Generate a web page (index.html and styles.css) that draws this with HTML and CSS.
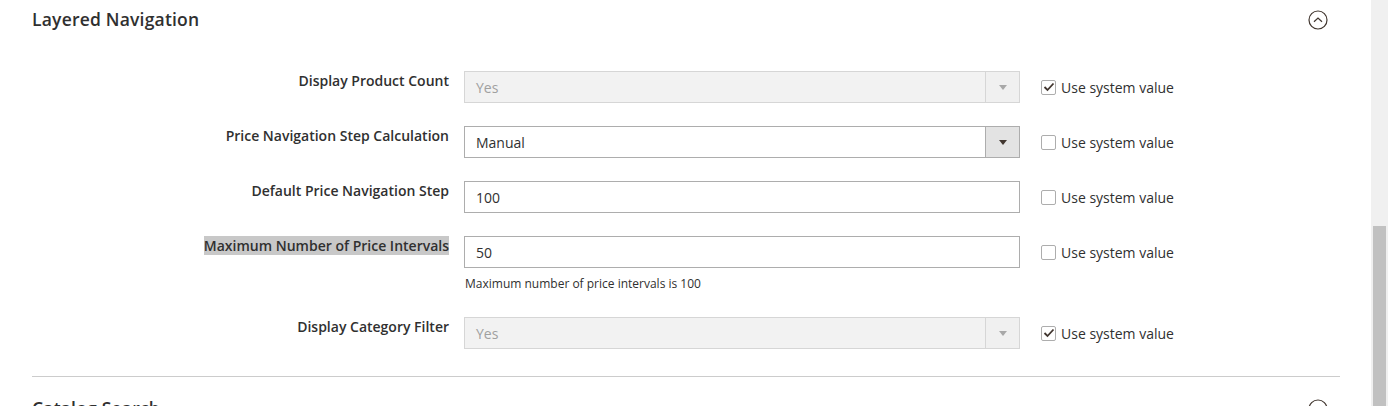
FILE: index.html
```html
<!DOCTYPE html>
<html lang="en">

<head>
  <meta charset="UTF-8" />
  <title>Catalog Configuration</title>
  <meta name="viewport" content="width=device-width, initial-scale=1.0">
  <link rel="stylesheet" href="styles.css">
</head>

<body>
  <div class="page">
    <div class="main">

      <!-- Layered Navigation -->
      <div class="section">
        <div class="section-head">
          <h2>Layered Navigation</h2>
          <svg class="toggle" width="20" height="20" viewBox="0 0 20 20">
            <circle cx="10" cy="10" r="9" fill="none" stroke="#41362f" stroke-width="1.2" />
            <path d="M6 11.8 L10 8 L14 11.8" fill="none" stroke="#41362f" stroke-width="1.2" />
          </svg>
        </div>

        <div class="fieldset">
          <div class="row">
            <div class="label"><span>Display Product Count</span></div>
            <div class="control">
              <div class="select disabled">
                <span class="value">Yes</span>
                <span class="arrow"></span>
              </div>
            </div>
            <label class="use-default">
              <span class="checkbox checked">
                <svg width="12" height="10" viewBox="0 0 12 10"><path d="M1.5 5 L4.5 8 L10.5 1.5" fill="none" stroke="#41362f" stroke-width="1.8" /></svg>
              </span>
              Use system value
            </label>
          </div>

          <div class="row">
            <div class="label"><span>Price Navigation Step Calculation</span></div>
            <div class="control">
              <div class="select">
                <span class="value">Manual</span>
                <span class="arrow"></span>
              </div>
            </div>
            <label class="use-default"><span class="checkbox"></span>Use system value</label>
          </div>

          <div class="row">
            <div class="label"><span>Default Price Navigation Step</span></div>
            <div class="control">
              <div class="input">100</div>
            </div>
            <label class="use-default"><span class="checkbox"></span>Use system value</label>
          </div>

          <div class="row">
            <div class="label"><span class="selected">Maximum Number of Price Intervals</span></div>
            <div class="control">
              <div class="input">50</div>
              <div class="note">Maximum number of price intervals is 100</div>
            </div>
            <label class="use-default"><span class="checkbox"></span>Use system value</label>
          </div>

          <div class="row">
            <div class="label"><span>Display Category Filter</span></div>
            <div class="control">
              <div class="select disabled">
                <span class="value">Yes</span>
                <span class="arrow"></span>
              </div>
            </div>
            <label class="use-default">
              <span class="checkbox checked">
                <svg width="12" height="10" viewBox="0 0 12 10"><path d="M1.5 5 L4.5 8 L10.5 1.5" fill="none" stroke="#41362f" stroke-width="1.8" /></svg>
              </span>
              Use system value
            </label>
          </div>
        </div>
      </div>

      <!-- Catalog Search -->
      <div class="section next">
        <div class="section-head">
          <h2>Catalog Search</h2>
          <svg class="toggle" width="20" height="20" viewBox="0 0 20 20">
            <circle cx="10" cy="10" r="9" fill="none" stroke="#41362f" stroke-width="1.2" />
            <path d="M6 8.2 L10 12 L14 8.2" fill="none" stroke="#41362f" stroke-width="1.2" />
          </svg>
        </div>
      </div>

    </div>

    <div class="scrollbar">
      <div class="thumb"></div>
    </div>
  </div>
</body>

</html>
```

FILE: styles.css
```css
* {
  margin: 0;
  padding: 0;
  box-sizing: border-box;
}

body {
  height: 406px;
  overflow: hidden;
  background: #fff;
  font-family: 'Open Sans', 'Liberation Sans', sans-serif;
  color: #303030;
}

.page {
  display: flex;
  height: 406px;
  padding-right: 4px;
}

.main {
  flex: 1;
  padding: 0 31px 0 32px;
}

/* === Sections === */
.section-head {
  display: flex;
  align-items: center;
  justify-content: space-between;
  padding: 8px 12px 8px 0;
}

.section-head h2 {
  font-size: 17.5px;
  font-weight: 600;
  line-height: 23px;
  color: #303030;
  letter-spacing: 0.2px;
}

.toggle {
  display: block;
}

.section.next {
  border-top: 1px solid #cccccc;
  padding-top: 12px;
}

.fieldset {
  padding: 32px 0 27px;
  display: flex;
  flex-direction: column;
  gap: 23px;
}

/* === Rows === */
.row {
  display: flex;
  align-items: flex-start;
}

.label {
  width: 417px;
  margin-right: 15px;
  text-align: right;
  font-size: 14px;
  font-weight: 600;
  line-height: 20px;
}

.label .selected {
  background: #c8c8c8;
}

.control {
  width: 556px;
}

.input,
.select {
  height: 32px;
  border: 1px solid #adadad;
  background: #fff;
  font-size: 14px;
  line-height: 30px;
  padding: 1px 0 0 11px;
  color: #303030;
}

.select {
  display: flex;
  padding: 0;
}

.select .value {
  flex: 1;
  padding: 1px 0 0 11px;
}

.select .arrow {
  width: 34px;
  border-left: 1px solid #adadad;
  background: #e3e3e3;
  position: relative;
}

.select .arrow::after {
  content: "";
  position: absolute;
  left: 13px;
  top: 13px;
  border-left: 4px solid transparent;
  border-right: 4px solid transparent;
  border-top: 5px solid #41362f;
}

.select.disabled {
  background: #f2f2f2;
  border-color: #d6d6d6;
  color: #a0a0a0;
}

.select.disabled .arrow {
  background: #f0f0f0;
  border-left-color: #d6d6d6;
}

.select.disabled .arrow::after {
  border-top-color: #a8a8a8;
}

.note {
  font-size: 12px;
  line-height: 20px;
  margin-top: 6px;
  padding-left: 1px;
  color: #303030;
}

/* === Use system value === */
.use-default {
  display: flex;
  align-items: center;
  height: 32px;
  margin-left: 21px;
  font-size: 14px;
  color: #303030;
  gap: 5px;
}

.checkbox {
  width: 15px;
  height: 15px;
  border: 1px solid #adadad;
  border-radius: 2px;
  background: #fff;
  display: flex;
  align-items: center;
  justify-content: center;
}

/* === Scrollbar === */
.scrollbar {
  width: 17px;
  background: #f0f0f0;
  padding: 226px 2px 0;
}

.thumb {
  height: 100%;
  background: #c1c1c1;
}
```
